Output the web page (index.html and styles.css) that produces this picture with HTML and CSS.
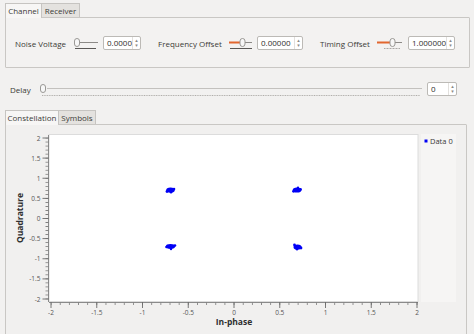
FILE: index.html
```html
<!DOCTYPE html>
<html>
<head>
<meta charset="utf-8">
<link rel="stylesheet" href="styles.css">
</head>
<body>
<div class="page">
  <div class="tabs">
    <div class="tab active w-chan">Channel</div>
    <div class="tab w-recv">Receiver</div>
  </div>
  <div class="frame top">
    <div class="row">
      <span class="lbl l1">Noise Voltage</span>
      <svg class="slider s1" width="26" height="16" viewBox="0 0 26 16">
        <line x1="8" y1="7.5" x2="26" y2="7.5" stroke="#8c8a87" stroke-width="1"/>
        <rect x="2.5" y="3.5" width="5" height="8" rx="2.5" fill="#f7f7f7" stroke="#9a9895"/>
        <line x1="3" y1="13.5" x2="24" y2="13.5" stroke="#5a5856" stroke-width="1"/>
      </svg>
      <div class="spin sp1"><span class="val">0.0000</span><span class="arr"><i>▴</i><i>▾</i></span></div>
      <span class="lbl l2">Frequency Offset</span>
      <svg class="slider s2" width="23" height="16" viewBox="0 0 23 16">
        <line x1="0" y1="7.5" x2="11" y2="7.5" stroke="#e2672f" stroke-width="2"/>
        <line x1="16" y1="7.5" x2="23" y2="7.5" stroke="#8c8a87" stroke-width="1"/>
        <rect x="11" y="3.5" width="5" height="8" rx="2.5" fill="#f7f7f7" stroke="#9a9895"/>
        <line x1="1" y1="13.5" x2="23" y2="13.5" stroke="#5a5856" stroke-width="1"/>
      </svg>
      <div class="spin sp2"><span class="val">0.00000</span><span class="arr"><i>▴</i><i>▾</i></span></div>
      <span class="lbl l3">Timing Offset</span>
      <svg class="slider s3" width="25" height="16" viewBox="0 0 25 16">
        <line x1="0" y1="7.5" x2="13" y2="7.5" stroke="#e2672f" stroke-width="2"/>
        <line x1="18" y1="7.5" x2="25" y2="7.5" stroke="#8c8a87" stroke-width="1"/>
        <rect x="13" y="3.5" width="5" height="8" rx="2.5" fill="#f7f7f7" stroke="#9a9895"/>
        <line x1="7" y1="13.5" x2="23" y2="13.5" stroke="#a9a7a4" stroke-width="1" stroke-dasharray="1 0.5"/>
      </svg>
      <div class="spin sp3"><span class="val">1.000000</span><span class="arr"><i>▴</i><i>▾</i></span></div>
    </div>
  </div>

  <div class="delay">
    <span class="lbl ld">Delay</span>
    <svg class="slider sd" width="382" height="16" viewBox="0 0 382 16">
      <line x1="7" y1="5.5" x2="382" y2="5.5" stroke="#c3c1be" stroke-width="1"/>
      <rect x="0.5" y="1.5" width="5" height="8" rx="2.5" fill="#f7f7f7" stroke="#9a9895"/>
      <line x1="2" y1="12.5" x2="380" y2="12.5" stroke="#b0aeab" stroke-width="1" stroke-dasharray="1 0.7"/>
    </svg>
    <div class="spin spd"><span class="val">0</span><span class="arr"><i>▴</i><i>▾</i></span></div>
  </div>

  <div class="tabs t2">
    <div class="tab active w-const">Constellation</div>
    <div class="tab w-sym">Symbols</div>
  </div>
  <div class="frame plotframe">
    <svg class="plot" width="459" height="208" viewBox="6 126 459 208">
      <defs>
        <pattern id="ym" x="0" y="138.6" width="3" height="4.025" patternUnits="userSpaceOnUse">
          <rect x="0" y="0" width="3" height="0.8" fill="#7a7a7a"/>
        </pattern>
        <pattern id="xm" x="50.6" y="0" width="9.15" height="3" patternUnits="userSpaceOnUse">
          <rect x="0" y="0" width="0.8" height="3" fill="#7a7a7a"/>
        </pattern>
      </defs>
      <rect x="49" y="135.5" width="369" height="167" fill="#ffffff" stroke="#dcdcdc" stroke-width="1"/>
      <rect x="421" y="135" width="35" height="168" fill="#f6f5f4"/>
      <line x1="48.5" y1="136" x2="48.5" y2="303" stroke="#8a8a8a"/>
      <line x1="49" y1="303.5" x2="418" y2="303.5" stroke="#8a8a8a"/>
      <rect x="45.5" y="138.6" width="3" height="162" fill="url(#ym)"/>
      <rect x="50.6" y="303.5" width="367.4" height="2.5" fill="url(#xm)"/>
      <g stroke="#6a6a6a" stroke-width="0.9">
        <path d="M42.5 139H48.5M42.5 159.1H48.5M42.5 179.25H48.5M42.5 199.4H48.5M42.5 219.5H48.5M42.5 239.6H48.5M42.5 259.75H48.5M42.5 279.9H48.5M42.5 300H48.5"/>
        <path d="M51 303V309M96.75 303V309M142.5 303V309M188.25 303V309M234 303V309M279.75 303V309M325.5 303V309M371.25 303V309M417 303V309"/>
      </g>
      <g class="ticklbl" text-anchor="end">
        <text x="40.5" y="141.5">2</text>
        <text x="40.5" y="161.6">1.5</text>
        <text x="40.5" y="181.7">1</text>
        <text x="40.5" y="201.9">0.5</text>
        <text x="40.5" y="222">0</text>
        <text x="40.5" y="242.1">-0.5</text>
        <text x="40.5" y="262.2">-1</text>
        <text x="40.5" y="282.4">-1.5</text>
        <text x="40.5" y="302.5">-2</text>
      </g>
      <g class="ticklbl" text-anchor="middle">
        <text x="51" y="316">-2</text>
        <text x="96.75" y="316">-1.5</text>
        <text x="142.5" y="316">-1</text>
        <text x="188.25" y="316">-0.5</text>
        <text x="234" y="316">0</text>
        <text x="279.75" y="316">0.5</text>
        <text x="325.5" y="316">1</text>
        <text x="371.25" y="316">1.5</text>
        <text x="417" y="316">2</text>
      </g>
      <text class="axtitle" x="20" y="222" text-anchor="middle" transform="rotate(-90 20 219)">Quadrature</text>
      <text class="axtitle" x="234" y="326" text-anchor="middle">In-phase</text>
      <g fill="#0000f5">
        <ellipse cx="170.5" cy="191" rx="4.3" ry="2.6"/>
        <circle cx="167" cy="192.5" r="1.4"/><circle cx="174" cy="190" r="1.3"/><circle cx="171" cy="193.3" r="1.3"/>
        <ellipse cx="297" cy="191" rx="4.3" ry="2.6"/>
        <circle cx="293.5" cy="192.3" r="1.4"/><circle cx="300.5" cy="190.5" r="1.4"/><circle cx="298" cy="188.8" r="1.2"/>
        <ellipse cx="170.5" cy="247.5" rx="4.6" ry="2.4"/>
        <circle cx="166.5" cy="248" r="1.3"/><circle cx="175" cy="246.5" r="1.3"/><circle cx="171" cy="250" r="1.2"/>
        <ellipse cx="297.5" cy="248" rx="4" ry="2.6"/>
        <circle cx="294.5" cy="246" r="1.4"/><circle cx="301" cy="249" r="1.4"/><circle cx="297" cy="250.3" r="1.2"/>
      </g>
      <rect x="424.5" y="140.5" width="3" height="3" fill="#0000f5"/>
      <text class="legend" x="430" y="145">Data 0</text>
    </svg>
  </div>
</div>
</body>
</html>
```

FILE: styles.css
```css
html, body {
  margin: 0;
  padding: 0;
}
body {
  background: #f2f1f0;
  font-family: "Open Sans", "DejaVu Sans", sans-serif;
  font-size: 8px;
  color: #3c3b37;
  width: 474px;
  height: 334px;
  overflow: hidden;
}
.page {
  padding: 2px 0 0 5px;
}
.tabs {
  display: flex;
  height: 15px;
  align-items: flex-end;
}
.tab {
  box-sizing: border-box;
  height: 14px;
  line-height: 13px;
  text-align: center;
  border: 1px solid #c6c4c1;
  border-bottom: none;
  background: #e4e2df;
  color: #3c3b37;
  font-size: 8px;
}
.tab.active {
  height: 15px;
  line-height: 14px;
  background: #f7f6f5;
  margin-bottom: -1px;
  position: relative;
  z-index: 1;
}
.w-chan { width: 37px; }
.w-recv { width: 38px; border-left: none; }
.w-const { width: 54px; }
.w-sym { width: 37px; border-left: none; }
.frame {
  box-sizing: border-box;
  border: 1px solid #c9c7c4;
  background: #f3f2f1;
  border-radius: 1px;
}
.frame.top {
  width: 465px;
  height: 51px;
  display: flex;
  align-items: center;
  padding-left: 9px;
}
.row {
  display: flex;
  align-items: center;
  margin-top: 1px;
}
.lbl {
  display: block;
  white-space: nowrap;
  color: #3c3b37;
}
.l1 { width: 57px; }
.l2 { width: 71px; }
.l3 { width: 57px; }
.slider {
  display: block;
  flex: none;
}
.spin {
  box-sizing: border-box;
  height: 14px;
  display: flex;
  align-items: center;
  justify-content: space-between;
  background: #ffffff;
  border: 1px solid #bcbab6;
  border-radius: 2px;
  padding-left: 3px;
  color: #2e2d2b;
}
.spin .val {
  line-height: 12px;
}
.spin .arr {
  display: flex;
  flex-direction: column;
  width: 7px;
  align-items: center;
  color: #8a8885;
  font-size: 5px;
  line-height: 5px;
  border-left: 1px solid #e2e0dd;
  height: 12px;
  justify-content: center;
}
.spin .arr i {
  font-style: normal;
}
.s1 { margin-right: 5px; }
.sp1 { width: 38px; margin-right: 17px; }
.s2 { margin-right: 5px; }
.sp2 { width: 46px; margin-right: 17px; }
.s3 { margin-right: 6px; }
.sp3 { width: 47px; }
.delay {
  display: flex;
  align-items: center;
  height: 14px;
  margin-top: 14px;
  padding-left: 5px;
}
.ld { width: 30px; }
.sd { margin-right: 5px; margin-top: 4px; }
.spd { width: 30px; }
.t2 {
  margin-top: 13px;
}
.plotframe {
  width: 462px;
  height: 220px;
  background: #f1f0ef;
}
.plot {
  display: block;
}
.ticklbl text {
  font-family: "Open Sans", "DejaVu Sans", sans-serif;
  font-size: 6.5px;
  fill: #555555;
}
.axtitle {
  font-family: "Open Sans", "DejaVu Sans", sans-serif;
  font-size: 8.5px;
  font-weight: bold;
  fill: #2f2f2f;
}
.legend {
  font-family: "Open Sans", "DejaVu Sans", sans-serif;
  font-size: 7.5px;
  fill: #3a3a3a;
}
```
